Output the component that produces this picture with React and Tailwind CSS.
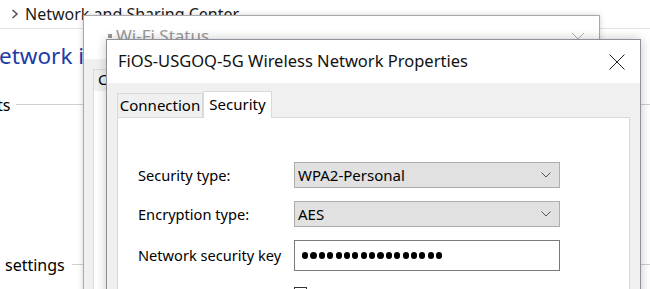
import React from 'react';

function Chevron() {
  return (
    <svg width="10" height="6" viewBox="0 0 10 6" className="text-[#555]">
      <polyline points="0.5,0.5 5,5 9.5,0.5" fill="none" stroke="currentColor" strokeWidth="1" />
    </svg>
  );
}

function Combo({ value }) {
  return (
    <div className="w-[266px] h-[26px] border border-[#adadad] bg-[#e1e1e1] flex items-center justify-between pl-[3px] pr-[8px]">
      <span className="text-[15px] text-black leading-none">{value}</span>
      <Chevron />
    </div>
  );
}

export default function App() {
  const dots = Array.from({ length: 17 });

  return (
    <div className="relative w-[650px] h-[289px] overflow-hidden bg-white font-['Noto_Sans',sans-serif] text-black">
      {/* Background: Network and Sharing Center */}
      <div className="flex flex-col">
        <div className="h-[29px] border-b border-[#e3e3e3] flex items-center pl-[11px] gap-[6px]">
          <svg width="8" height="10" viewBox="0 0 8 10">
            <polyline points="1.5,1 6,5 1.5,9" fill="none" stroke="#555" strokeWidth="1.6" />
          </svg>
          <span className="text-[16px] text-[#1a1a1a] leading-none">Network and Sharing Center</span>
        </div>
        <div className="mt-[16px] ml-[-1px] text-[22.5px] leading-none text-[#1e3ba5] whitespace-nowrap">
          etwork information
        </div>
        <div className="mt-[29px] flex items-center gap-[6px]">
          <span className="text-[16px] leading-none ml-[-3px]">ts</span>
          <div className="flex-1 h-px bg-[#cfcfcf]" />
        </div>
        <div className="mt-[144px] flex items-center gap-[7px]">
          <span className="text-[16px] leading-none ml-[5px]">settings</span>
          <div className="flex-1 h-px bg-[#cfcfcf]" />
        </div>
      </div>

      {/* Wi-Fi Status window */}
      <div className="absolute left-[83px] top-[15px] w-[517px] h-[300px] border border-[#a9a9a9] bg-[#f0f0f0] shadow-[0_0_6px_rgba(0,0,0,0.18)] flex flex-col">
        <div className="h-[43px] bg-white flex items-start justify-between pl-[24px] pr-[14px] pt-[11px]">
          <div className="flex items-center gap-[4px]">
            <div className="w-[4px] h-[4px] bg-[#999]" />
            <span className="text-[17px] leading-none text-[#9a9a9a]">Wi-Fi Status</span>
          </div>
          <svg width="14" height="14" viewBox="0 0 14 14" className="mt-[5px]">
            <path d="M1 1 L13 13 M13 1 L1 13" stroke="#b0b0b0" strokeWidth="1" fill="none" />
          </svg>
        </div>
        <div className="flex-1 pl-[9px] pt-[10px]">
          <div className="w-[30px] h-[22px] border border-[#d9d9d9] border-b-0 bg-[#f0f0f0] pl-[4px] pt-[2px] text-[15px] leading-none">
            C
          </div>
          <div className="h-full border-l border-[#d9d9d9] bg-white" />
        </div>
      </div>

      {/* Front dialog: Wireless Network Properties */}
      <div className="absolute left-[106px] top-[39px] w-[535px] h-[270px] border border-[#8c919a] bg-[#f0f0f0] shadow-[0_0_10px_rgba(0,0,0,0.22)] flex flex-col">
        <div className="h-[43px] bg-white flex items-center justify-between pl-[11px] pr-[15px]">
          <span className="text-[16.5px] leading-none text-[#111]">FiOS-USGOQ-5G Wireless Network Properties</span>
          <svg width="16" height="16" viewBox="0 0 16 16">
            <path d="M0.5 0.5 L15.5 15.5 M15.5 0.5 L0.5 15.5" stroke="#222" strokeWidth="1" fill="none" />
          </svg>
        </div>
        <div className="flex-1 px-[10px] pt-[8px] flex flex-col">
          <div className="flex items-end relative z-10">
            <div className="w-[86px] h-[24px] border border-[#d9d9d9] border-b-0 bg-[#f0f0f0] flex items-center justify-center text-[15px] leading-none">
              Connection
            </div>
            <div className="w-[69px] h-[27px] border border-[#d9d9d9] border-b-0 bg-white flex items-center justify-center text-[15px] leading-none mb-[-1px] pb-[2px]">
              Security
            </div>
          </div>
          <div className="flex-1 border border-[#d9d9d9] bg-white pl-[20px] pt-[44px] flex flex-col gap-[13px]">
            <div className="flex items-center">
              <span className="w-[156px] text-[14.6px] leading-none">Security type:</span>
              <Combo value="WPA2-Personal" />
            </div>
            <div className="flex items-center">
              <span className="w-[156px] text-[14.6px] leading-none">Encryption type:</span>
              <Combo value="AES" />
            </div>
            <div className="flex items-center">
              <span className="w-[156px] text-[14.6px] leading-none">Network security key</span>
              <div className="w-[266px] h-[31px] border border-[#7a7a7a] bg-white flex items-center pl-[7px] gap-[2.2px]">
                {dots.map((_, i) => (
                  <span key={i} className="w-[6.2px] h-[6.2px] rounded-full bg-black" />
                ))}
              </div>
            </div>
            <div className="flex items-center mt-[3px]">
              <span className="w-[156px]" />
              <div className="w-[13px] h-[13px] border border-[#333] bg-white" />
            </div>
          </div>
        </div>
      </div>
    </div>
  );
}
